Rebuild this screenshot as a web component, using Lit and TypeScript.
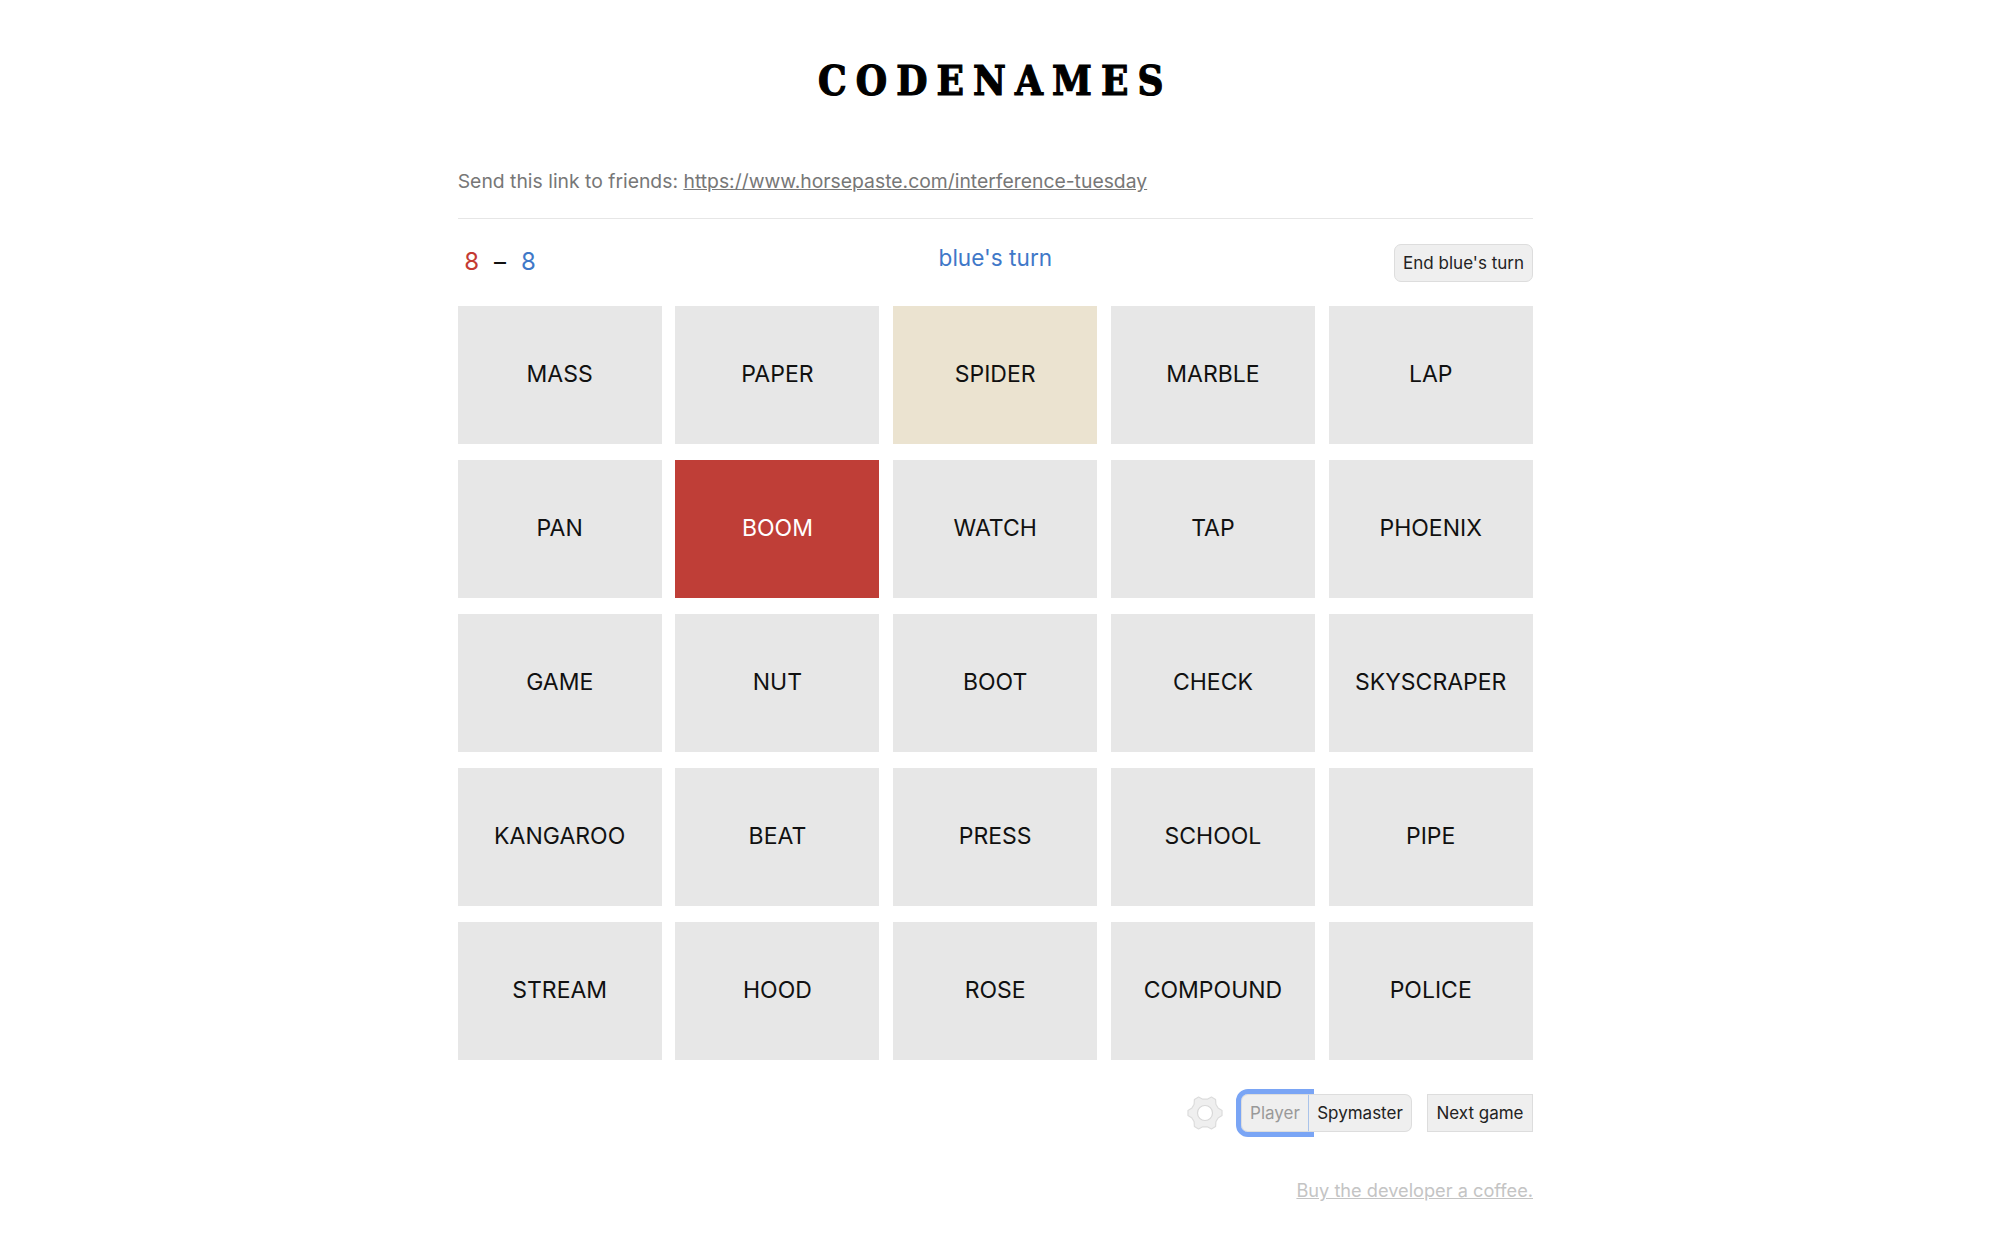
import { LitElement, html, css, svg } from "lit";
import { customElement } from "lit/decorators.js";

const WORDS = [
  "MASS","PAPER","SPIDER","MARBLE","LAP",
  "PAN","BOOM","WATCH","TAP","PHOENIX",
  "GAME","NUT","BOOT","CHECK","SKYSCRAPER",
  "KANGAROO","BEAT","PRESS","SCHOOL","PIPE",
  "STREAM","HOOD","ROSE","COMPOUND","POLICE",
];
const COVERED: Record<string, string> = { SPIDER: "neutral", BOOM: "red" };

const gearPoints = (): string => {
  const pts: string[] = [];
  const at = (deg: number, r: number) => {
    const a = (deg * Math.PI) / 180;
    pts.push(`${(18 + r * Math.cos(a)).toFixed(2)},${(18 + r * Math.sin(a)).toFixed(2)}`);
  };
  for (let i = 0; i < 6; i++) {
    const c = i * 60;
    at(c - 21, 14);
    at(c - 8, 17.2);
    at(c + 8, 17.2);
    at(c + 21, 14);
  }
  return pts.join(" ");
};

@customElement("app-root")
export class AppRoot extends LitElement {
  static styles = css`
    :host { display: block; font-family: Inter, "Liberation Sans", sans-serif; color: #111; background: #fff; }
    .page { width: 1075.3px; margin-left: 457.7px; height: 1236px; box-sizing: border-box; padding-top: 57px; }
    h1 { margin: 0; height: 47px; line-height: 47px; text-align: center; font-family: "DejaVu Serif", serif; font-weight: 700; font-size: 36px; letter-spacing: 9.1px; color: #000; -webkit-text-stroke: 1.1px #000; transform: scaleY(1.12); }
    .share { margin-top: 60px; height: 34px; line-height: 34px; font-size: 19.35px; color: #777; }
    .share a { color: #777; text-decoration: underline; }
    hr { margin: 20px 0 0; border: 0; border-top: 1px solid #e6e6e6; }
    .status { display: grid; grid-template-columns: 1fr auto 1fr; height: 87px; align-items: start; }
    .score { display: flex; gap: 15px; font-size: 24px; padding: 26px 0 0 6.5px; line-height: 34px; }
    .red { color: #c43a32; } .blue { color: #3f78c8; } 
    .turn { font-size: 22.6px; line-height: 32px; color: #3f78c8; padding-top: 23px; }
    .end { justify-self: end; margin-top: 25px; }
    button { font: inherit; font-size: 17px; height: 38px; padding: 0 8px; background: #efefef; color: #222; border: 1.5px solid #ddd; border-radius: 7px; }
    .board { display: grid; grid-template-columns: repeat(5, 204px); column-gap: 13.75px; row-gap: 16px; }
    .card { height: 138px; box-sizing: border-box; padding-bottom: 2px; background: #e7e7e7; display: flex; align-items: center; justify-content: center; font-size: 23px; color: #111; }
    .card.neutral { background: #ebe3d0; }
    .card.red { background: #bf3e37; color: #fff; }
    .tools { display: flex; justify-content: flex-end; align-items: center; margin-top: 34px; height: 38px; }
    .gear { width: 36px; height: 36px; margin-right: 17.5px; }
    .seg { display: flex; margin-right: 15px; }
    .seg button:first-child { width: 68px; color: #999; padding: 0; border-radius: 7px 0 0 7px; border-right: 1px solid #a9c3ea; outline: 5px solid #7aa5f5; outline-offset: 0; }
    .seg button:last-child { width: 103px; padding: 0; border-left: 0; border-radius: 0 7px 7px 0; position: relative; }
    .next { width: 106px; padding: 0; border-radius: 0; }
    .foot { text-align: right; margin-top: 41px; font-size: 18.2px; line-height: 34px; }
    .foot a { color: #c4c4c4; text-decoration: underline; }
  `;

  render() {
    return html`<div class="page">
      <h1>CODENAMES</h1>
      <div class="share">Send this link to friends: <a href="#">https://www.horsepaste.com/interference-tuesday</a></div>
      <hr />
      <div class="status">
        <div class="score"><span class="red">8</span><span>–</span><span class="blue">8</span></div>
        <div class="turn">blue's turn</div>
        <button class="end">End blue's turn</button>
      </div>
      <div class="board">
        ${WORDS.map((w) => html`<div class="card ${COVERED[w] ?? ""}">${w}</div>`)}
      </div>
      <div class="tools">
        <svg class="gear" viewBox="0 0 36 36" aria-hidden="true">
          ${svg`<polygon points=${gearPoints()} fill="#efefef" stroke="#dcdcdc" stroke-width="1.2" stroke-linejoin="round"/>`}
          <circle cx="18" cy="18" r="7.5" fill="#fff" stroke="#d8d8d8" stroke-width="1.2"/>
        </svg>
        <div class="seg"><button>Player</button><button>Spymaster</button></div>
        <button class="next">Next game</button>
      </div>
      <div class="foot"><a href="#">Buy the developer a coffee.</a></div>
    </div>`;
  }
}
